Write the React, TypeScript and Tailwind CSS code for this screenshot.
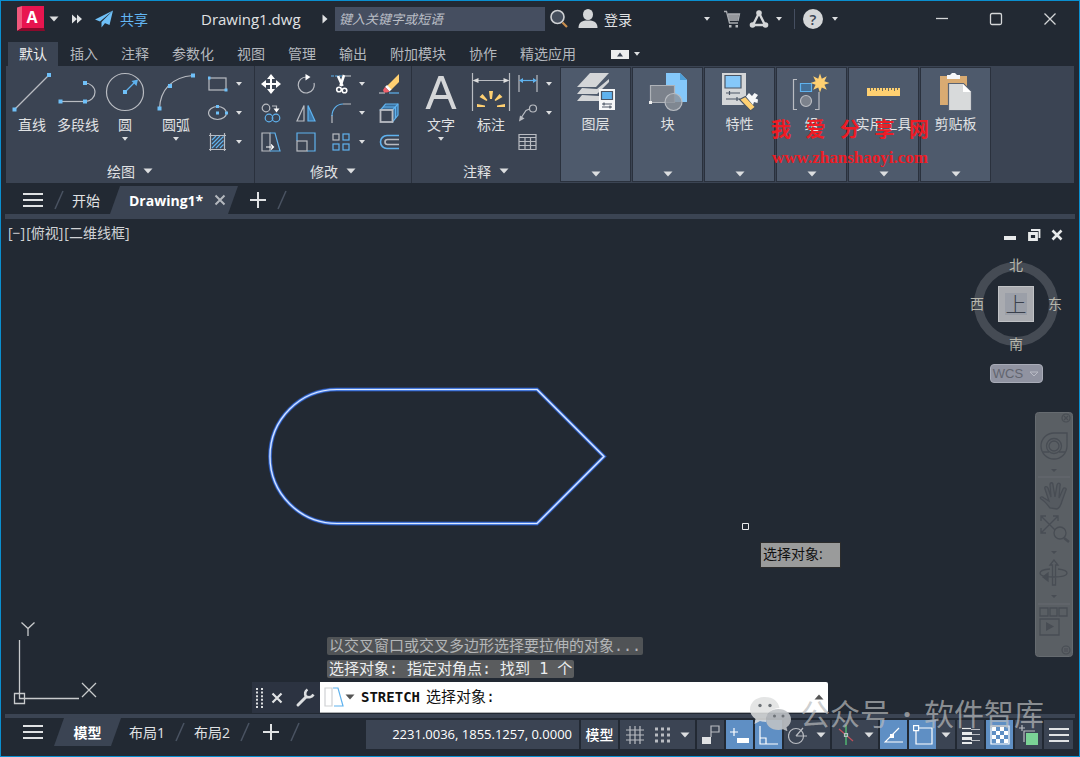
import type { ReactNode } from "react";

const G = "#b9bcc2";
const B = "#5fb2ee";

type Props = { children: ReactNode };
type Entry = { label: string; icon: ReactNode };

const Ico = ({ children }: Props) => (
  <svg viewBox="0 0 20 20" className="size-5 shrink-0" fill="none" stroke={G} strokeWidth="1.2">
    {children}
  </svg>
);

const Big = ({ children }: Props) => (
  <svg viewBox="0 0 40 40" className="size-10 shrink-0" fill="none" stroke={G} strokeWidth="1.2">
    {children}
  </svg>
);

const Caret = ({ wide = false }: { wide?: boolean }) =>
  wide ? (
    <svg viewBox="0 0 10 6" className="h-1.5 w-2.5 shrink-0" fill="#dcdee0">
      <path d="M0.5 0.5h9L5 5.5z" />
    </svg>
  ) : (
    <svg viewBox="0 0 6 4" className="h-1 w-1.5 shrink-0" fill="#dcdee0">
      <path d="M0 0h6L3 3.8z" />
    </svg>
  );

const Slash = () => (
  <svg viewBox="0 0 10 20" className="h-5 w-2.5 shrink-0" stroke="#4a5362" strokeWidth="1.5">
    <path d="M9 1L1 19" />
  </svg>
);

const Burger = () => (
  <svg viewBox="0 0 20 20" className="size-5" stroke="#e0e2e4" strokeWidth="2">
    <path d="M0 4h20M0 10h20M0 16h20" />
  </svg>
);

const Plus = () => (
  <svg viewBox="0 0 18 18" className="size-[18px]" stroke="#e0e2e4" strokeWidth="2">
    <path d="M9 1v16M1 9h16" />
  </svg>
);

// little blue grip squares used by the drawing icons
const Dot = ({ x, y, s = 4 }: { x: number; y: number; s?: number }) => (
  <rect x={x - s / 2} y={y - s / 2} width={s} height={s} fill="#6fc0f8" stroke="none" />
);

const menus = ["默认", "插入", "注释", "参数化", "视图", "管理", "输出", "附加模块", "协作", "精选应用"];

const drawSmall: Entry[] = [
  { label: "矩形", icon: <Ico><rect x="1" y="4" width="17" height="12" /><Dot x={1} y={4} s={3} /><Dot x={18} y={16} s={3} /></Ico> },
  { label: "椭圆", icon: <Ico><ellipse cx="9.5" cy="10" rx="9" ry="6.5" /><Dot x={9.5} y={10} s={3} /><Dot x={9.5} y={3.5} s={3} /><Dot x={18.5} y={10} s={3} /></Ico> },
  { label: "图案填充", icon: <Ico><path d="M2.500 1v18M16.500 1v18M1 3.500h17M1 17.500h17" /><path stroke={B} d="M4 8l4-4M4 12l8-8M4 16l11.500-11.500M8 16l7.500-7.500M12 16l3.500-3.500" /></Ico> },
];

const modifyTools: Entry[] = [
  { label: "移动", icon: <Ico><g fill="#fff" stroke="none"><path d="M9 4h2v12H9z" /><path d="M4 9h12v2H4z" /><path d="M10 0l4 5H6zM10 20l4-5H6zM0 10l5-4v8zM20 10l-5-4v8z" /></g></Ico> },
  { label: "旋转", icon: <Ico><path d="M10.500 3A8 8 0 1 0 18 9" /><path fill="#fff" stroke="none" d="M9.500 0l5 3-5 3.500z" /></Ico> },
  { label: "修剪", icon: <Ico><path stroke={B} strokeDasharray="3 1" d="M0 2h11" /><path d="M14 2h6" /><g stroke="#fff"><path strokeWidth="2.600" d="M7 2l4.500 10M13 1L9.500 12" /><circle cx="8" cy="15.500" r="2.300" strokeWidth="1.600" /><circle cx="13.500" cy="16.500" r="2.300" strokeWidth="1.600" /></g></Ico> },
  { label: "删除", icon: <Ico><path d="M0 19h6" /><path stroke={B} d="M10 19h10" /><g stroke="none"><path fill="#ffd071" d="M20 0v8l-8 8-4-4z" /><path fill="#fff" d="M8 11l4.500 4.500-2 2L6 13z" /><path fill="#f0606a" d="M6 13l4.500 4.500L8 18.500H5L4 16z" /></g></Ico> },
  { label: "复制", icon: <Ico><circle cx="5" cy="5" r="3.800" /><path d="M11 3h4.500v4" /><path fill="#fff" stroke="none" d="M12.500 5.500h6l-3 4z" /><g stroke={B}><circle cx="8" cy="15" r="3.800" /><circle cx="15" cy="15" r="3.800" /></g></Ico> },
  { label: "镜像", icon: <Ico><path d="M8 2.500V18H1z" /><path stroke={B} fill="#3e78a8" d="M12 2.500V18h7z" /></Ico> },
  { label: "圆角", icon: <Ico><path d="M1 20v-8M12 1h8" /><path stroke={B} d="M1 13C1 6 6 1 12 1" /></Ico> },
  { label: "分解", icon: <Ico><path fill="#3b6f9c" stroke={B} d="M1.500 7l5-6h12.500v11l-5.500 7V7z" /><path stroke={B} d="M13.500 7L19 1M4 4h12.500v11" /><rect x="1.500" y="7" width="12" height="12" fill="#3b4453" strokeWidth="1.800" /></Ico> },
  { label: "拉伸", icon: <Ico><path d="M1 1h8v18H1z" /><path stroke={B} d="M9 1h5l5 18H9" /><path stroke="#fff" d="M5 15h7M10 12.500l2.500 2.500-2.500 2.500" /></Ico> },
  { label: "缩放", icon: <Ico><path stroke={B} d="M1 9V1h18v18h-8" /><rect x="1" y="9" width="10" height="10" /></Ico> },
  { label: "阵列", icon: <Ico><rect x="2" y="2" width="6" height="6" /><g stroke={B}><rect x="12" y="2" width="6" height="6" /><rect x="2" y="12" width="6" height="6" /><rect x="12" y="12" width="6" height="6" /></g></Ico> },
  { label: "偏移", icon: <Ico><path stroke={B} strokeWidth="1.600" d="M20 3.500H8a6.500 6.500 0 0 0 0 13h12" /><path strokeWidth="1.600" d="M20 7.500H8.500a2.500 2.500 0 0 0 0 5H20" /></Ico> },
];

const noteTools: Entry[] = [
  { label: "线性", icon: <Ico><path d="M1 1v17M19 1v17" /><path stroke={B} d="M3 6.500h14" /><path fill={B} stroke="none" d="M1 6.500l4-2.500v5zM19 6.500l-4-2.500v5z" /></Ico> },
  { label: "引线", icon: <Ico><circle cx="15" cy="5.500" r="3.500" /><path d="M11.500 6L8 7.500 3 15" /><path fill={G} stroke="none" d="M1 18.500l1-6 4.500 3z" /></Ico> },
  { label: "表格", icon: <Ico><path d="M1 2.500h17v15H1zM1 5.500h17M1 9.500h17M1 13.500h17M7 5.500v12M12.500 5.500v12" /></Ico> },
];

const collapsed: Entry[] = [
  {
    label: "图层",
    icon: (
      <Big>
        <g fill="#d4d6d8" stroke="none">
          <path d="M14 1h19L20 15H1z" />
          <path d="M6 16l-5 6h20l12-12v-3L21 17zM6 23l-5 6h22V24z" />
        </g>
        <path fill="#f6f7f8" stroke="none" d="M23 17h16v21H23z" />
        <path fill={B} stroke="#4a5565" d="M25.500 19.500h11v8h-11z" />
        <path stroke="#4a5565" d="M26 32h10M26 35h10M28 30.500v3M34 33.500v3" />
      </Big>
    ),
  },
  {
    label: "块",
    icon: (
      <Big>
        <path fill="#85c8fa" stroke="none" d="M18 1h14l7 7v22H18z" />
        <path fill="#4e9fd8" stroke="none" d="M32 1v7h7z" />
        <path fill="#7c828c" stroke="#aeb2b8" d="M2.500 13.500h24v17h-24z" />
        <circle cx="25.500" cy="30" r="8.500" fill="#8c929b" fillOpacity="0.800" stroke="#b8bcc2" />
        <path fill="#eee" stroke="none" d="M1 29h3v3H1z" />
      </Big>
    ),
  },
  {
    label: "特性",
    icon: (
      <Big>
        <path fill="#d4d6d8" stroke="none" d="M2 1h24v32H2z" />
        <path fill="#85c8fa" stroke="#4a5565" d="M5 3.500h16v12.500H5z" />
        <path stroke="#4a5565" d="M6 21h14M6 27h14M9.500 19v4M17 25v4" />
        <path fill="#ffd071" stroke="#4a5565" d="M19.500 27.500l6-3 10 10.500-5 4z" />
        <path fill="#f6f7f8" stroke="none" d="M26 24.500l3-3.500 3 3 2.500-3 3.500 2-2.500 3.500 2.500 1-.5 3.500-3.500-1-1 3z" />
      </Big>
    ),
  },
  {
    label: "组",
    icon: (
      <Big>
        <path d="M5 7.500H1.500v30H5M23 37.500h4V20" />
        <path fill="#44719a" stroke={B} d="M8.500 11.500h11v8h-11z" />
        <circle cx="14" cy="29" r="5.500" fill="#7c828c" />
        <path
          fill="#ffd071"
          stroke="none"
          d="M28 1.500l1.800 5.200 5-2.400-2.400 5 5.100 1.700-5.100 1.800 2.400 5-5-2.400L28 20.500l-1.800-5.100-5 2.400 2.400-5L18.500 11l5.100-1.700-2.400-5 5 2.400z"
        />
      </Big>
    ),
  },
  {
    label: "实用工具",
    icon: (
      <Big>
        <path fill="#ffd071" stroke="none" d="M3 16h33v8H3z" />
        <path stroke="#6a6a5c" strokeWidth="1" d="M6.500 16v3M9.500 16v2M12.500 16v3M15.500 16v2M18.500 16v3M21.500 16v2M24.500 16v3M27.500 16v2M30.500 16v3M33.500 16v2" />
      </Big>
    ),
  },
  {
    label: "剪贴板",
    icon: (
      <Big>
        <path fill="#d9ab72" stroke="none" d="M4 4h27v29H4z" />
        <path fill="#f6f7f8" stroke="none" d="M11 3h3l2-2h3l2 2h3v4H11z" />
        <path fill="#d8dadb" stroke="#5a6474" d="M12.500 11.500h15l8 8V38.500h-23z" />
        <path fill="#fff" stroke="none" d="M27 12v8h8z" />
      </Big>
    ),
  },
];

const Small = ({ item, caret = false }: { item: Entry; caret?: boolean }) => (
  <div className="flex items-center gap-2">
    <button type="button" aria-label={item.label}>{item.icon}</button>
    {caret && <button type="button" aria-label={`${item.label}选项`}><Caret /></button>}
  </div>
);

const Tool = ({ label, caret = false, width, children }: { label: string; caret?: boolean; width: string; children: ReactNode }) => (
  <button type="button" className={`flex shrink-0 flex-col items-center pt-1.5 ${width}`}>
    {children}
    <span className="mt-[3px] h-5 leading-5">{label}</span>
    {caret && <span className="mt-0.5 flex"><Caret /></span>}
  </button>
);

const PanelFoot = ({ label }: { label: string }) => (
  <button type="button" className="flex h-6 items-center justify-center gap-2">
    {label}
    <Caret wide />
  </button>
);

const TitleBar = () => (
  <header className="flex h-10 items-center pb-1">
    <button type="button" aria-label="应用程序菜单" className="ml-4">
      <svg viewBox="0 0 28 26" className="h-[26px] w-7">
        <path fill="#e8154f" d="M5 0h22v22H5z" />
        <path fill="#f0587c" d="M0 1.500L5 0v22l-5 3z" />
        <path fill="#8b0a2c" d="M5 22h22l1 3H0z" />
        <text x="15" y="17" textAnchor="middle" className="font-['Open_Sans',sans-serif] text-[16px] font-bold" fill="#fff">A</text>
      </svg>
    </button>
    <button type="button" aria-label="应用程序选项" className="flex w-[18px] justify-center"><Caret wide /></button>
    <button type="button" aria-label="更多" className="flex w-7 justify-center">
      <svg viewBox="0 0 12 10" className="h-2.5 w-3" fill="#e0e2e4"><path d="M1 0.500l5 4.500-5 4.500zM6 0.500l5 4.500-5 4.500z" /></svg>
    </button>
    <button type="button" className="ml-1 flex items-center gap-[7px] text-[#63b6f3]">
      <svg viewBox="0 0 18 18" className="size-[18px]" fill="#6fc0f8">
        <path d="M18 0.500L0 9.500l5 2zM18 0.500L6.500 12v5.500l3-3.800zM18 0.500L8.500 12.500l6 2.500z" />
      </svg>
      共享
    </button>
    <h1 className="ml-[53px] w-[99px] text-[15px] whitespace-nowrap">Drawing1.dwg</h1>
    <svg viewBox="0 0 6 10" className="mr-[7px] ml-[22px] h-2.5 w-1.5" fill="#e0e2e4"><path d="M0.500 0.500L5.500 5l-5 4.500z" /></svg>
    <input
      type="search"
      aria-label="搜索"
      placeholder="键入关键字或短语"
      className="h-6 w-[210px] bg-[#454e60] px-1 text-[13px] italic outline-none placeholder:text-[#b9bdc5]"
    />
    <button type="button" aria-label="查找" className="ml-1">
      <svg viewBox="0 0 20 20" className="size-5" fill="none">
        <circle cx="8.500" cy="8" r="6.500" fill="#454e5c" stroke="#cfd1d4" strokeWidth="1.600" />
        <path stroke="#c98f4f" strokeWidth="2.200" d="M13.500 13.500l4.500 4.500" />
      </svg>
    </button>
    <button type="button" className="ml-[9px] flex items-center gap-1.5">
      <svg viewBox="0 0 20 20" className="size-5" fill="#d4d6d8">
        <ellipse cx="10" cy="5.500" rx="5" ry="5.500" />
        <path d="M0.500 19c0-5 3-7 7-7.500h5c4 .5 7 2.500 7 7.500z" />
      </svg>
      登录
    </button>
    <div className="ml-auto flex items-center">
      <button type="button" aria-label="登录选项" className="flex w-3 justify-center"><Caret /></button>
      <button type="button" aria-label="应用商店" className="ml-[9px]">
        <svg viewBox="0 0 20 20" className="size-5" fill="#94979c">
          <path d="M5.500 5H17l-1.500 7H7z" />
          <path fill="none" stroke="#a9acb1" strokeWidth="1.300" d="M2 2.500h2.500L7.500 14H16M6 5h11.500l-1.500 7" />
          <path fill="#b4b7bb" d="M7 16h2.500v2.500H7zM13.500 16H16v2.500h-2.500z" />
        </svg>
      </button>
      <button type="button" aria-label="Autodesk" className="ml-[7px]">
        <svg viewBox="0 0 20 20" className="size-5" fill="#d4d6d8">
          <path fill="none" stroke="#d4d6d8" strokeWidth="2.400" d="M10 4L4 16h12z" />
          <circle cx="10" cy="4" r="2.800" /><circle cx="3.500" cy="16" r="2.800" /><circle cx="16.500" cy="16" r="2.800" />
        </svg>
      </button>
      <button type="button" aria-label="Autodesk 选项" className="ml-1 flex w-3 justify-center"><Caret /></button>
      <span className="ml-[9px] h-5 w-px bg-[#454e60]" />
      <button type="button" aria-label="帮助" className="ml-2 size-5 rounded-full bg-[#d4d6d8] text-[15px] leading-5 font-semibold text-[#3b4453]">?</button>
      <button type="button" aria-label="帮助选项" className="ml-1.5 flex w-3 justify-center"><Caret /></button>
      <div className="ml-[74px] flex text-[#d4d6d8]">
        <button type="button" aria-label="最小化" className="flex w-[54px] justify-center">
          <svg viewBox="0 0 14 14" className="size-3.5" stroke="currentColor" strokeWidth="1.300"><path d="M1 6.500h12" /></svg>
        </button>
        <button type="button" aria-label="最大化" className="flex w-[54px] justify-center">
          <svg viewBox="0 0 14 14" className="size-3.5" fill="none" stroke="currentColor" strokeWidth="1.300"><rect x="1.500" y="1.500" width="11" height="11" rx="1.500" /></svg>
        </button>
        <button type="button" aria-label="关闭" className="mr-0.5 flex w-[54px] justify-center">
          <svg viewBox="0 0 14 14" className="size-3.5" stroke="currentColor" strokeWidth="1.300"><path d="M1.500 1.500l11 11M12.500 1.500l-11 11" /></svg>
        </button>
      </div>
    </div>
  </header>
);

const Menus = () => (
  <nav className="flex h-[25px] items-end gap-px pl-[7px] text-[#b4b8be]">
    {menus.map((m, i) => (
      <button
        key={m}
        type="button"
        className={i === 0 ? "h-6 bg-[#3b4453] px-[11px] pb-0.5 text-[#eceeef]" : "h-6 px-[11px] pb-0.5"}
      >
        {m}
      </button>
    ))}
    <button type="button" aria-label="功能区显示" className="ml-[23px] flex h-6 items-center gap-[5px]">
      <svg viewBox="0 0 18 9" className="h-[9px] w-[18px]"><path fill="#eceeef" d="M0 0h18v9H0z" /><path fill="#3b4453" d="M6 6.500h6l-3-4z" /></svg>
      <Caret />
    </button>
  </nav>
);

const Ribbon = () => (
  <section className="relative mx-[5px] flex h-[117px] bg-[#3b4453]">
    <div className="flex w-[249px] flex-col border-r border-[#2a313d]">
      <div className="flex flex-1 items-start pl-1.5">
        <Tool label="直线" width="w-10">
          <Big><path d="M3 37L37 3" /><Dot x={2.5} y={37.5} /><Dot x={37} y={3} /></Big>
        </Tool>
        <Tool label="多段线" width="w-[52px]">
          <Big><path d="M2 29.500h24" /><path d="M27 11c5 0 10 4 10 9s-4 9.500-10 9.500" /><Dot x={2.5} y={29.5} /><Dot x={27} y={29.5} /><Dot x={27} y={11} /></Big>
        </Tool>
        <Tool label="圆" caret width="w-[42px]">
          <Big><circle cx="20" cy="20" r="18.500" /><path stroke={B} d="M20 20l9-9" /><path fill={B} stroke="none" d="M33 7.500L31.500 14 26.500 9z" /><Dot x={20} y={20} /></Big>
        </Tool>
        <Tool label="圆弧" caret width="w-[60px]">
          <Big><path d="M3.500 37C4 18 16 5 37 3.500" /><Dot x={3.5} y={36.5} /><Dot x={14} y={14} /><Dot x={37} y={3.5} /></Big>
        </Tool>
        <div className="flex flex-col gap-[9px] pt-2 pl-0.5">
          {drawSmall.map((item) => <Small key={item.label} item={item} caret />)}
        </div>
      </div>
      <PanelFoot label="绘图" />
    </div>

    <div className="flex w-[157px] flex-col border-r border-[#2a313d]">
      <div className="grid flex-1 grid-cols-[35px_35px_48px_20px] content-start gap-y-[9px] pt-2 pl-1.5">
        {modifyTools.map((item, i) => <Small key={item.label} item={item} caret={i % 4 === 2} />)}
      </div>
      <PanelFoot label="修改" />
    </div>

    <div className="flex w-[148px] flex-col">
      <div className="flex flex-1 items-start pl-1">
        <Tool label="文字" caret width="w-[50px]">
          <Big><path fill="#d4d6d8" stroke="none" d="M17.500 4h5l13 33H31l-4-10h-14L9 37H4.500zM20 8.500L14.500 23h11z" /></Big>
        </Tool>
        <Tool label="标注" width="w-[50px]">
          <Big>
            <path d="M1.500 1v38M38.500 1v38M3 8.500h34" />
            <path fill="#ddd" stroke="none" d="M1.500 8.500l6-2.500v5zM38.500 8.500l-6-2.500v5z" />
            <path fill="#ffd071" stroke="none" d="M18 19h4l-1 8h-2zM8.500 25l3-3 5 6-1 1zM31.500 25l-3-3-5 6 1 1zM6 32l8 1.500v1.500H6zM34 32l-8 1.500v1.500h8z" />
          </Big>
        </Tool>
        <div className="flex flex-col gap-[9px] pt-2 pl-0.5">
          {noteTools.map((item, i) => <Small key={item.label} item={item} caret={i < 2} />)}
        </div>
      </div>
      <PanelFoot label="注释" />
    </div>

    <div className="flex gap-px py-px">
      {collapsed.map((item) => (
        <button
          key={item.label}
          type="button"
          className="flex w-[71px] flex-col items-center border border-[#2a313d] bg-[#4e5a6c] pt-1"
        >
          {item.icon}
          <span className="mt-0.5 h-5 leading-5">{item.label}</span>
          <span className="mt-auto mb-1 flex"><Caret wide /></span>
        </button>
      ))}
    </div>

    <div className="pointer-events-none absolute top-[50px] left-[765px] w-[158px] text-[#ee1c25]">
      <p className="flex justify-between text-[20px] leading-7 font-bold">
        {[..."我爱分享网"].map((c) => <span key={c}>{c}</span>)}
      </p>
      <p className="text-center font-['Liberation_Serif',serif] text-[17px] leading-7 font-bold">www.zhanshaoyi.com</p>
    </div>
  </section>
);

const FileTabs = () => (
  <nav className="flex h-[31px] items-end">
    <div className="flex h-7 items-center">
      <button type="button" aria-label="文件选项卡菜单" className="ml-[22px]"><Burger /></button>
      <span className="ml-[11px] flex"><Slash /></span>
      <button type="button" className="ml-2">开始</button>
      <div className="ml-2.5 flex h-7 w-[128px] items-center bg-[#3b4453] pl-[19px] [clip-path:polygon(10px_0,100%_0,calc(100%-10px)_100%,0_100%)]">
        <button type="button" className="w-[76px] text-left font-bold whitespace-nowrap text-white">Drawing1*</button>
        <button type="button" aria-label="关闭选项卡" className="ml-[9px]">
          <svg viewBox="0 0 12 12" className="size-3" stroke="#b4b8be" strokeWidth="2"><path d="M1.500 1.500l9 9M10.500 1.500l-9 9" /></svg>
        </button>
      </div>
      <button type="button" aria-label="新建图形" className="ml-[11px]"><Plus /></button>
      <span className="ml-2.5 flex"><Slash /></span>
    </div>
  </nav>
);

const ViewCube = () => (
  <div className="absolute top-[34px] right-[7px] flex w-[112px] flex-col items-center">
    <svg viewBox="0 0 112 104" className="h-[104px] w-28 font-['Noto_Sans_CJK_SC',sans-serif] text-[14px]" textAnchor="middle" fill="#b6b5ab">
      <circle cx="56" cy="51" r="37.500" fill="none" stroke="#454b54" strokeWidth="9" />
      <rect x="38.500" y="33.500" width="35" height="35" fill="#a9abb0" stroke="#c0c2c5" />
      <rect x="45" y="40" width="22" height="22" fill="#9b9fa8" />
      <text x="56" y="59" fill="#3a404c" className="text-[21px] font-light">上</text>
      <text x="56" y="17">北</text>
      <text x="17" y="56">西</text>
      <text x="95" y="56">东</text>
      <text x="56" y="96">南</text>
    </svg>
    <button type="button" className="mt-[7px] flex h-[19px] w-[53px] items-center justify-center gap-1.5 rounded border border-[#a9acb8] bg-[#9093a1] font-['Liberation_Sans',sans-serif] text-[13px] text-[#62656f]">
      WCS
      <svg viewBox="0 0 10 6" className="h-1.5 w-2.5" fill="none" stroke="#b8bac4"><path d="M1 1h8L5 5z" /></svg>
    </button>
  </div>
);

const NavBar = () => (
  <svg viewBox="0 0 38 245" className="absolute top-[193px] right-1.5 h-[245px] w-[38px]" fill="none" stroke="#484d54" strokeWidth="1.300">
    <rect x="0.500" y="0.500" width="37" height="244" rx="3" fill="#5a5f64" stroke="#666b70" strokeWidth="1" />
    <circle cx="31" cy="6" r="4" strokeWidth="1.200" /><path strokeWidth="1.200" d="M29 4l4 4M33 4l-4 4" />
    <path d="M19 21h13v13a13 13 0 1 1-13-13z" /><circle cx="19" cy="34" r="7.500" /><circle cx="19" cy="34" r="5" /><path d="M8 40h6M24 40h6" />
    <path strokeWidth="1" stroke="#666b70" d="M3 65h32M3 192h32" />
    <path fill="#484d54" stroke="none" d="M16 57h6l-3 3zM16 139h6l-3 3zM16 183h6l-3 3z" />
    <path fill="#555a60" d="M15 96c-3-4-7-8-9-9-2-2 1-3 3-1l5 3-4-12c-1-3 2-3 3-1l3 9-1-12c0-3 3-3 3 0l2 12 2-12c1-3 4-2 3 1l-1 12 4-9c1-2 4-1 3 1l-4 11c-1 4-3 7-5 8z" />
    <path d="M6 104l17 17M23 104L6 121M6 109v-5h5M18 104h5v5M6 116v5h5" /><circle cx="25" cy="121" r="6" fill="#5a5f64" /><path strokeWidth="2.500" d="M29 126l5 4" />
    <path d="M19 148l-4 5h2.500v20h3v-20H23zM15 157c-6 .5-10 2-10 4 0 3 6 4 13 4s14-1 14-4c0-2-4-3.500-9-4" /><path fill="#484d54" d="M8 165l5-4v8z" />
    <path d="M5 196h8v8H5zM15 196h7v8h-7zM24 196h8v8h-8zM5 207h19v16H5z" /><path fill="#484d54" stroke="none" d="M11 210v9l8-4.500z" />
    <circle cx="31" cy="238" r="4" strokeWidth="1.200" /><path strokeWidth="1" d="M29 237h4M29 239h4" />
  </svg>
);

const outline = "M536 170.500L603 237.500L536 304.500H336A67 67 0 0 1 336 170.500Z";

const CommandLine = () => (
  <div className="absolute bottom-px left-[251px] w-[576px] font-['DejaVu_Sans_Mono','Noto_Sans_CJK_SC',monospace] text-[15px]">
    <div className="flex flex-col items-start gap-[5px] pb-1 pl-[75px] whitespace-pre">
      <p className="rounded-xs bg-[#505356] px-0.5 leading-[18px] text-[#b4b6b8]">以交叉窗口或交叉多边形选择要拉伸的对象...</p>
      <p className="rounded-xs bg-[#5a5c5e] px-0.5 leading-[18px] text-[#eceeef]">选择对象: 指定对角点: 找到 1 个</p>
    </div>
    <div className="flex h-[31px] items-center bg-[#2c3341]">
      <svg viewBox="0 0 7 20" className="ml-1 h-5 w-[7px]" stroke="#dcdee0" strokeWidth="2" strokeDasharray="2 1.600"><path d="M1 0v20M6 0v20" /></svg>
      <button type="button" aria-label="关闭命令行" className="ml-2">
        <svg viewBox="0 0 12 12" className="size-3" stroke="#e0e2e4" strokeWidth="2.200"><path d="M1.500 1.500l9 9M10.500 1.500l-9 9" /></svg>
      </button>
      <button type="button" aria-label="自定义" className="ml-3">
        <svg viewBox="0 0 20 20" className="size-5" fill="none" stroke="#dcdee0">
          <path strokeWidth="3" strokeLinecap="round" d="M3 17l8-8" />
          <path strokeWidth="2.600" d="M12.500 1.500C10 3 9.500 6 11 8.500c3 1.500 6 .5 7.500-2" />
        </svg>
      </button>
      <div className="ml-[5px] flex h-full flex-1 items-center rounded-r-xs border-b border-[#b0b2b4] bg-white text-[#111]">
        <svg viewBox="0 0 20 20" className="ml-1 size-5" fill="none" strokeWidth="1.200"><path stroke="#cfd1d4" d="M1 1h7v18H1z" /><path stroke={B} d="M9 1h5l5 18h-9" /></svg>
        <svg viewBox="0 0 10 6" className="ml-px h-1.5 w-2.5" fill="#555"><path d="M0.500 0.500h9L5 5.500z" /></svg>
        <label htmlFor="command" className="ml-1.5 whitespace-nowrap">
          <b className="text-[14px]">STRETCH</b>
          <span className="ml-1.5">选择对象:</span>
        </label>
        <input id="command" className="h-full min-w-0 flex-1 bg-transparent px-2 outline-none" />
        <button type="button" aria-label="历史记录" className="mr-1">
          <svg viewBox="0 0 10 6" className="h-1.5 w-2.5" fill="#555"><path d="M0.500 5.500h9L5 0.500z" /></svg>
        </button>
      </div>
    </div>
  </div>
);

const Canvas = () => (
  <main className="relative min-h-[494px] flex-1">
    <div className="flex items-center justify-between pt-0.5 pr-4 pl-[7px]">
      <p className="flex h-[22px] items-center gap-px text-[14px] text-[#d0d2d5]"><span>[−]</span><span>[俯视]</span><span>[二维线框]</span></p>
      <div className="flex h-[22px] items-end gap-2.5 pb-px">
        <button type="button" aria-label="最小化视口">
          <svg viewBox="0 0 14 14" className="size-3.5" fill="#e8eaeb"><path d="M1 8h12v4H1z" /></svg>
        </button>
        <button type="button" aria-label="还原视口">
          <svg viewBox="0 0 14 14" className="size-3.5" fill="none" stroke="#e8eaeb" strokeWidth="1.800"><path d="M4 2h8.500v8" /><path strokeWidth="2.800" d="M2.500 5.500h7v6h-7z" /></svg>
        </button>
        <button type="button" aria-label="关闭视口">
          <svg viewBox="0 0 12 14" className="h-3.5 w-3" stroke="#e8eaeb" strokeWidth="2.600"><path d="M1.500 2.500l9 9M10.500 2.500l-9 9" /></svg>
        </button>
      </div>
    </div>

    <svg className="pointer-events-none absolute inset-0 size-full" fill="none">
      <path d={outline} stroke="#2d5cc4" strokeWidth="4" strokeOpacity="0.700" />
      <path d={outline} stroke="#4f86f0" strokeWidth="2.400" />
      <path d={outline} stroke="#dce8ff" strokeWidth="1.200" />
      <path d="M741.500 304.500h6v6h-6z" stroke="#e8eaeb" />
    </svg>

    <p className="absolute top-[323px] left-[759px] h-[26px] w-[81px] border border-[#2c2c2c] bg-[#9a9b9b] px-0.5 leading-[22px] text-[#111]">选择对象:</p>

    <svg viewBox="0 0 100 90" className="absolute bottom-[6px] left-[7px] h-[90px] w-[100px]" fill="none" stroke="#c8cacc" strokeWidth="1.300">
      <path d="M11.500 22v58.500H71M6.500 75.500h10v10h-10z" />
      <path d="M13.500 4.500l6.500 6 6.500-6M20 10.500v7.500M74 65l14 14M88 65L74 79" />
    </svg>

    <ViewCube />
    <NavBar />
    <CommandLine />
  </main>
);

const Cell = ({ label, on = false, children }: { label: string; on?: boolean; children: ReactNode }) => (
  <button
    type="button"
    aria-label={label}
    aria-pressed={on}
    className={`flex h-[29px] w-[27px] items-center justify-center ${on ? "bg-[#5f8fc4]" : "bg-[#3b4453]"}`}
  >
    {children}
  </button>
);

const CellCaret = ({ label }: { label: string }) => (
  <button type="button" aria-label={label} className="flex h-[29px] w-[19px] items-center justify-center bg-[#3b4453]"><Caret wide /></button>
);

const StatusBar = () => (
  <footer className="relative flex h-[38px] items-start pr-1.5">
    <div className="flex h-7 items-center">
      <button type="button" aria-label="布局菜单" className="ml-[22px]"><Burger /></button>
      <button type="button" className="ml-[11px] h-7 w-[67px] bg-[#3b4453] font-bold text-white [clip-path:polygon(10px_0,100%_0,calc(100%-10px)_100%,0_100%)]">模型</button>
      <button type="button" className="ml-2 w-[37px] text-left whitespace-nowrap">布局1</button>
      <span className="ml-[9px] flex"><Slash /></span>
      <button type="button" className="ml-[9px] w-[37px] text-left whitespace-nowrap">布局2</button>
      <span className="ml-[9px] flex"><Slash /></span>
      <button type="button" aria-label="新建布局" className="ml-3"><Plus /></button>
      <span className="ml-2.5 flex"><Slash /></span>
    </div>
    <div className="ml-auto flex gap-0.5 pt-0.5">
      <output className="flex h-[29px] w-[213px] items-center justify-end bg-[#3b4453] pr-[7px] text-[13px] text-white">2231.0036, 1855.1257, 0.0000</output>
      <button type="button" className="h-[29px] w-[37px] bg-[#3b4453] font-medium text-white">模型</button>
      <div className="flex bg-[#3b4453] px-px">
        <Cell label="栅格"><Ico><path d="M5 1v18M10 1v18M15 1v18M1 5h18M1 10h18M1 15h18" /></Ico></Cell>
        <Cell label="捕捉模式">
          <Ico><path strokeWidth="3" strokeDasharray="3 3" d="M3 4h15M3 10h15M3 16h15" /></Ico>
        </Cell>
        <CellCaret label="捕捉设置" />
      </div>
      <Cell label="推断约束"><Ico><path fill="#e0e2e4" stroke="none" d="M1 12h9v7H1z" /><path d="M10 12V1h8v6h-8" /></Ico></Cell>
      <Cell label="动态输入" on><Ico><path stroke="#fff" d="M4 3v8M0 7h8" /><path fill="#fff" stroke="none" d="M7 13h12v5H7z" /></Ico></Cell>
      <Cell label="正交模式" on><Ico><path stroke="#fff" d="M1 1v18h18M1 13h6v6" /></Ico></Cell>
      <div className="flex">
        <Cell label="极轴追踪"><Ico><circle cx="8" cy="11" r="7.500" /><path d="M8 11h11M8 11l7-8" /></Ico></Cell>
        <CellCaret label="极轴设置" />
      </div>
      <div className="flex">
        <Cell label="等轴测草图"><Ico><path stroke="#c0505a" d="M3 4l14 12" /><path stroke="#4fb070" strokeWidth="1.600" d="M10 0v20" /><path d="M8.500 8.500h3v3h-3z" /></Ico></Cell>
        <CellCaret label="等轴测设置" />
      </div>
      <Cell label="对象捕捉追踪" on><Ico><path stroke="#fff" d="M15 3L1 17h18" /><path fill="#fff" stroke="none" d="M6 9h4v4H6z" /></Ico></Cell>
      <div className="flex">
        <Cell label="对象捕捉" on><Ico><path stroke="#fff" d="M6 3h13v16H3V6M0.600 0.600h5v5h-5z" /></Ico></Cell>
        <CellCaret label="对象捕捉设置" />
      </div>
      <Cell label="线宽">
        <Ico>
          <g strokeWidth="1.200"><path d="M10 4.500h9M10 9.500h9M10 15.500h9" /></g>
          <g stroke="#e8eaeb"><path strokeWidth="1.200" d="M1 3.500h9" /><path strokeWidth="3" d="M1 8.500h10M1 13.500h10" /><path strokeWidth="2" d="M1 18h10" /></g>
        </Ico>
      </Cell>
      <Cell label="透明度" on>
        <Ico>
          <path stroke="#fff" d="M1 1h18v18H1z" />
          <path fill="#fff" stroke="none" d="M2 2h4v4H2zM10 2h4v4h-4zM6 6h4v4H6zM14 6h4v4h-4zM2 10h4v4H2zM10 10h4v4h-4zM6 14h4v4H6zM14 14h4v4h-4z" />
        </Ico>
      </Cell>
      <Cell label="选择循环"><Ico><path d="M3 0v6M0 3h6M5 17V6h11" /><path fill="#7bd396" stroke="none" d="M7 8h12v12H7z" /></Ico></Cell>
      <button type="button" aria-label="自定义" className="flex h-[29px] w-[29px] items-center justify-center bg-[#3b4453]"><Burger /></button>
    </div>

    <div className="pointer-events-none absolute right-[35px] bottom-[24px] flex items-center text-[#b9bbbd]/70">
      <svg viewBox="0 0 42 34" className="mr-2 h-[34px] w-[42px]">
        <path fill="#dfe0e1" fillOpacity="0.850" d="M15 0C6 0 0 5.500 0 12.500c0 4 2 7 5.500 9.500L4.500 27l5.500-3c2 .7 4 1 6 1C16 16 22 11 29.500 11 28.500 4.500 23 0 15 0z" />
        <path fill="#bfc2c5" fillOpacity="0.900" d="M28.500 12C21 12 16 16.500 16 22.500S21 33 28.500 33c1.600 0 3-.2 4.500-.7l4.500 2-1-4c3-2 4.500-4.600 4.500-7.800C41 16.500 35.500 12 28.500 12z" />
        <g fill="#6e7378"><circle cx="10" cy="8.500" r="1.700" /><circle cx="20" cy="8.500" r="1.700" /><circle cx="24.500" cy="19" r="1.500" /><circle cx="33" cy="19" r="1.500" /></g>
      </svg>
      <p className="flex text-[30px] leading-9">
        公众号<span className="w-[34px] text-center font-bold">·</span>软件智库
      </p>
    </div>
  </footer>
);

export default function App() {
  return (
    <div className="flex min-h-screen flex-col border border-[#0a8fd0] bg-[#222933] font-['Open_Sans','Noto_Sans_CJK_SC',sans-serif] text-[14px] text-[#e0e2e4]">
      <TitleBar />
      <Menus />
      <Ribbon />
      <FileTabs />
      <div className="mx-1 h-[5px] bg-[#3b4453]" />
      <Canvas />
      <div className="mx-1 h-1 bg-[#3b4453]" />
      <StatusBar />
    </div>
  );
}
